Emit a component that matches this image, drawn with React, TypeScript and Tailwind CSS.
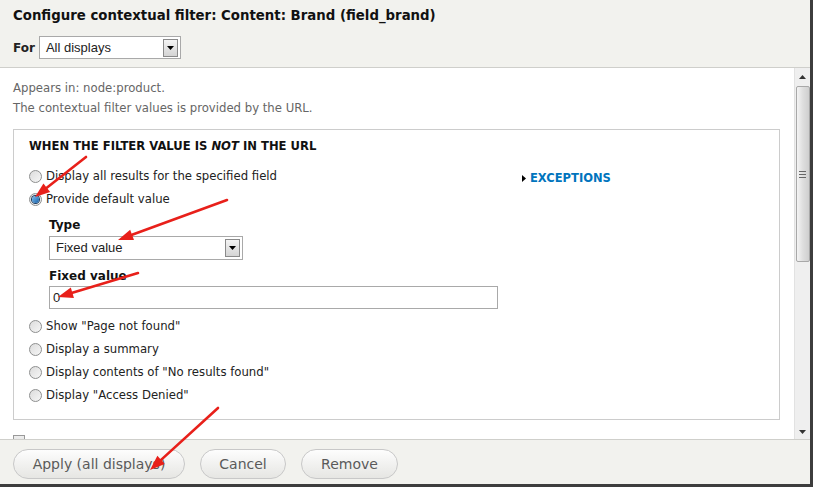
import React from "react";

const ui = { fontFamily: '"DejaVu Sans", Verdana, sans-serif' };
const arial = { fontFamily: '"Liberation Sans", Arial, sans-serif' };

function Radio({ checked }: { checked?: boolean }) {
  return (
    <span className="relative inline-flex h-[13px] w-[13px] shrink-0 items-center justify-center rounded-full border border-[#8e8f8f] bg-gradient-to-br from-[#dcdcdc] to-[#f6f6f6]">
      {checked && (
        <span className="h-[7px] w-[7px] rounded-full bg-gradient-to-br from-[#7fc0f0] to-[#0d5fa8] ring-1 ring-[#1d3a5c]" />
      )}
    </span>
  );
}

function RadioRow({ label, checked }: { label: string; checked?: boolean }) {
  return (
    <div className="flex h-[23px] items-center gap-[4px] text-[11.7px] text-[#222]">
      <Radio checked={checked} />
      <span>{label}</span>
    </div>
  );
}

function SelectBox({ value, className }: { value: string; className: string }) {
  return (
    <div
      className={`flex items-center justify-between border border-[#a9a9a9] bg-white pl-[6px] pr-[2px] text-[13px] text-[#222] ${className}`}
      style={arial}
    >
      <span>{value}</span>
      <span className="flex h-[18px] w-[15px] items-center justify-center border border-[#8a8a8a] bg-gradient-to-b from-[#f4f4f4] to-[#d4d4d4]">
        <svg width="7" height="4" viewBox="0 0 7 4">
          <path d="M0 0h7L3.5 4z" fill="#000" />
        </svg>
      </span>
    </div>
  );
}

function Arrow({ x1, y1, x2, y2 }: { x1: number; y1: number; x2: number; y2: number }) {
  const a = Math.atan2(y2 - y1, x2 - x1);
  const len = 15;
  const w = 5.5;
  const bx = x2 - len * Math.cos(a);
  const by = y2 - len * Math.sin(a);
  const px = -Math.sin(a) * w;
  const py = Math.cos(a) * w;
  return (
    <g>
      <line x1={x1} y1={y1} x2={bx} y2={by} stroke="#e8201a" strokeWidth="2.6" strokeLinecap="round" />
      <polygon points={`${x2},${y2} ${bx + px},${by + py} ${bx - px},${by - py}`} fill="#e8201a" />
    </g>
  );
}

export default function App() {
  return (
    <div className="relative flex h-[487px] w-[813px] overflow-hidden bg-[#3d3d3d]" style={ui}>
      <div className="flex h-[484px] w-[810px] flex-col">
        {/* Header */}
        <div className="h-[68px] shrink-0 border-b border-[#cfcfcb] bg-[#f2f2ee] px-[13px]">
          <h1 className="pt-[6px] text-[13.3px] leading-[20px] font-bold text-[#111]">
            Configure contextual filter: Content: Brand (field_brand)
          </h1>
          <div className="mt-[10px] flex items-center gap-[4px]">
            <span className="text-[12px] font-bold text-[#222]">For</span>
            <SelectBox value="All displays" className="h-[23px] w-[142px]" />
          </div>
        </div>

        {/* Scrolling content */}
        <div className="flex h-[371px] shrink-0 bg-white">
          <div className="flex-1 overflow-hidden pl-[13px] pr-[14px]">
            <div className="pt-[10px] text-[11.7px] leading-[20px] text-[#666]">
              <p>Appears in: node:product.</p>
              <p>The contextual filter values is provided by the URL.</p>
            </div>
            <div className="mt-[11px] h-[291px] border border-[#ccc] pl-[15px]">
              <div className="flex">
                <div className="w-[493px]">
                  <div className="mt-[6px] h-[20px] text-[11.6px] leading-[20px] font-bold text-[#111]">
                    WHEN THE FILTER VALUE IS <em>NOT</em> IN THE URL
                  </div>
                  <div className="mt-[9px]">
                    <RadioRow label="Display all results for the specified field" />
                    <RadioRow label="Provide default value" checked />
                  </div>
                  <div className="pl-[20px]">
                    <div className="mt-[5px] h-[18px] text-[12px] leading-[18px] font-bold text-[#111]">Type</div>
                    <SelectBox value="Fixed value" className="mt-[2px] h-[24px] w-[194px]" />
                    <div className="mt-[7px] h-[18px] text-[12px] leading-[18px] font-bold text-[#111]">Fixed value</div>
                    <div
                      className="mt-[1px] flex h-[23px] w-[449px] items-center border border-[#a9a9a9] px-[3px] text-[13px] text-[#222]"
                      style={arial}
                    >
                      0
                    </div>
                  </div>
                  <div className="mt-[6px]">
                    <RadioRow label={'Show "Page not found"'} />
                    <RadioRow label="Display a summary" />
                    <RadioRow label={'Display contents of "No results found"'} />
                    <RadioRow label={'Display "Access Denied"'} />
                  </div>
                </div>
                <div className="mt-[37px] flex h-[23px] items-center gap-[4px] text-[11.5px] font-bold text-[#0074bd]">
                  <svg width="4" height="7" viewBox="0 0 4 7">
                    <path d="M0 0l4 3.5L0 7z" fill="#000" />
                  </svg>
                  <span>EXCEPTIONS</span>
                </div>
              </div>
            </div>
            <div className="mt-[15px] h-[12px] w-[12px] border border-[#999] bg-gradient-to-b from-[#eee] to-[#ddd]" />
          </div>

          {/* Scrollbar */}
          <div className="flex w-[16px] shrink-0 flex-col items-center border-l border-[#e2e2e2] bg-[#efefef]">
            <div className="flex h-[18px] items-center justify-center">
              <svg width="7" height="4" viewBox="0 0 7 4">
                <path d="M3.5 0L7 4H0z" fill="#333" />
              </svg>
            </div>
            <div className="flex h-[176px] w-[14px] items-center justify-center rounded-[2px] border border-[#a8a8a8] bg-gradient-to-r from-[#f4f4f4] via-[#dedede] to-[#cfcfcf]">
              <div className="flex flex-col gap-[2px]">
                <span className="h-px w-[7px] bg-[#666]" />
                <span className="h-px w-[7px] bg-[#666]" />
                <span className="h-px w-[7px] bg-[#666]" />
              </div>
            </div>
            <div className="flex-1" />
            <div className="flex h-[14px] items-center justify-center">
              <svg width="7" height="4" viewBox="0 0 7 4">
                <path d="M0 0h7L3.5 4z" fill="#333" />
              </svg>
            </div>
          </div>
        </div>

        {/* Footer */}
        <div className="flex h-[45px] shrink-0 items-start gap-[15px] border-t border-[#cfcfcb] bg-[#f2f2ee] pt-[9px] pl-[13px]">
          {[
            { label: "Apply (all displays)", w: "w-[172px]" },
            { label: "Cancel", w: "w-[86px]" },
            { label: "Remove", w: "w-[97px]" },
          ].map((b) => (
            <button
              key={b.label}
              className={`h-[30px] ${b.w} rounded-full border border-[#c8c8c8] bg-gradient-to-b from-[#fdfdfd] to-[#e6e6e3] text-[14px] text-[#5a5a5a]`}
            >
              {b.label}
            </button>
          ))}
        </div>
      </div>

      {/* Annotation arrows */}
      <svg className="pointer-events-none absolute inset-0" width="813" height="487">
        <Arrow x1={86} y1={157} x2={35} y2={197} />
        <Arrow x1={227} y1={200} x2={118} y2={240} />
        <Arrow x1={138} y1={273} x2={58} y2={297} />
        <Arrow x1={218} y1={408} x2={150} y2={470} />
      </svg>
    </div>
  );
}
